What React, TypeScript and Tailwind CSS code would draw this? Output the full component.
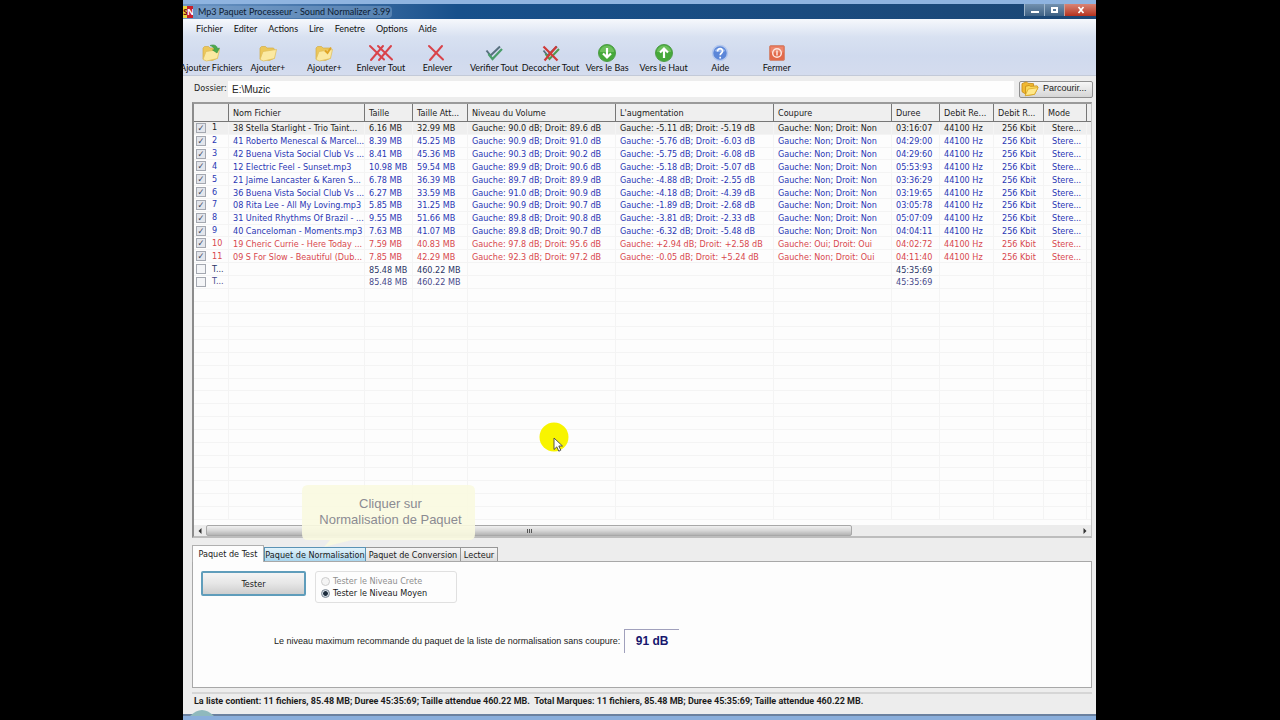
import type { ReactNode } from "react";

const TAHOMA = "font-['DejaVu_Sans_Condensed','DejaVu_Sans',sans-serif]";
const SEGOE = "font-[Lato,'Open_Sans',sans-serif]";

const COLUMNS = [
  { label: "", width: "w-[35px]" },
  { label: "Nom Fichier", width: "w-[136px]" },
  { label: "Taille", width: "w-[48px]" },
  { label: "Taille Att...", width: "w-[55px]" },
  { label: "Niveau du Volume", width: "w-[148px]" },
  { label: "L'augmentation", width: "w-[158px]" },
  { label: "Coupure", width: "w-[118px]" },
  { label: "Duree", width: "w-[48px]" },
  { label: "Debit Re...", width: "w-[54px]" },
  { label: "Debit R...", width: "w-[50px]" },
  { label: "Mode", width: "w-[43px]" },
];

type Row = { no: string; checked: boolean; color: string; cells: string[] };

const BLUE = "text-[#2a36b4]";
const RED = "text-[#d8484e]";
const NN = "Gauche: Non; Droit: Non";

function track(no: number, color: string, name: string, size: string, wav: string, l: string, r: string, al: string, ar: string, clip: string, time: string): Row {
  return {
    no: String(no),
    checked: true,
    color,
    cells: [name, size + " MB", wav + " MB", `Gauche: ${l} dB; Droit: ${r} dB`, `Gauche: ${al} dB; Droit: ${ar} dB`, clip, time, "44100 Hz", "256 Kbit", "Stere..."],
  };
}

const ROWS: Row[] = [
  track(1, "text-[#222]", "38 Stella Starlight - Trio Taint...", "6.16", "32.99", "90.0", "89.6", "-5.11", "-5.19", NN, "03:16:07"),
  track(2, BLUE, "41 Roberto Menescal & Marcel...", "8.39", "45.25", "90.9", "91.0", "-5.76", "-6.03", NN, "04:29:00"),
  track(3, BLUE, "42 Buena Vista Social Club Vs ...", "8.41", "45.36", "90.3", "90.2", "-5.75", "-6.08", NN, "04:29:60"),
  track(4, BLUE, "12 Electric Feel - Sunset.mp3", "10.98", "59.54", "89.9", "90.6", "-5.18", "-5.07", NN, "05:53:93"),
  track(5, BLUE, "21 Jaime Lancaster & Karen S...", "6.78", "36.39", "89.7", "89.9", "-4.88", "-2.55", NN, "03:36:29"),
  track(6, BLUE, "36 Buena Vista Social Club Vs ...", "6.27", "33.59", "91.0", "90.9", "-4.18", "-4.39", NN, "03:19:65"),
  track(7, BLUE, "08 Rita Lee - All My Loving.mp3", "5.85", "31.25", "90.9", "90.7", "-1.89", "-2.68", NN, "03:05:78"),
  track(8, BLUE, "31 United Rhythms Of Brazil - ...", "9.55", "51.66", "89.8", "90.8", "-3.81", "-2.33", NN, "05:07:09"),
  track(9, BLUE, "40 Canceloman - Moments.mp3", "7.63", "41.07", "89.8", "90.7", "-6.32", "-5.48", NN, "04:04:11"),
  track(10, RED, "19 Cheric Currie - Here Today ...", "7.59", "40.83", "97.8", "95.6", "+2.94", "+2.58", "Gauche: Oui; Droit: Oui", "04:02:72"),
  track(11, RED, "09 S For Slow - Beautiful (Dub...", "7.85", "42.29", "92.3", "97.2", "-0.05", "+5.24", "Gauche: Non; Droit: Oui", "04:11:40"),
  { no: "T...", checked: false, color: "text-[#2b3566]", cells: ["", "85.48 MB", "460.22 MB", "", "", "", "45:35:69", "", "", ""] },
  { no: "T...", checked: false, color: "text-[#4a4a8c]", cells: ["", "85.48 MB", "460.22 MB", "", "", "", "45:35:69", "", "", ""] },
];

const EMPTY_ROWS = Array.from({ length: 18 }, (_, i) => i);

function Folder({ children }: { children?: ReactNode }) {
  return (
    <svg viewBox="0 0 20 20" className="size-5" aria-hidden="true">
      <path d="M2 16V5l1.5-1.500h4L9 5h6.500l1 1.500V15l-5 2.500z" fill="#ecc75a" stroke="#d3ad48" strokeWidth=".7" />
      <path d="M5 8.500 18.500 6.500l-2 9-11 2.500L2 16.500z" fill="#fbe9a2" stroke="#dfbd58" strokeWidth=".7" />
      {children}
    </svg>
  );
}

const RedCross = ({ x = 0 }: { x?: number }) => (
  <path d={`M${2 + x} 3l14 13.500M${15 + x} 3L${3 + x} 17`} stroke="#d9434a" strokeWidth="2" fill="none" strokeLinecap="round" />
);

function RoundArrow({ up }: { up: boolean }) {
  return (
    <svg viewBox="0 0 20 20" className="size-5" aria-hidden="true">
      <circle cx="10" cy="10" r="8.500" fill="#46a93a" stroke="#4f9d48" />
      <path d="M3 9a7 6.500 0 0 1 14 0z" fill="#7ccb6a" opacity=".7" />
      <path d={up ? "M10 15V5.500M6 9.500l4-4 4 4" : "M10 5v9.500M6 10.500l4 4 4-4"} stroke="#fff" strokeWidth="2.200" fill="none" />
    </svg>
  );
}

const TOOLS: { label: string; icon: ReactNode }[] = [
  {
    label: "Ajouter Fichiers",
    icon: (
      <Folder>
        <path d="M9 2.500c4-1.500 7 0 7.500 3l2-.5-2.500 5-4.500-3 2-.5C13 4.500 11.500 3.500 9 2.500z" fill="#4daa4a" stroke="#2f8a3a" strokeWidth=".5" />
      </Folder>
    ),
  },
  { label: "Ajouter+", icon: <Folder /> },
  {
    label: "Ajouter+",
    icon: (
      <Folder>
        <path d="M11 7.500 13.500 10 17 4.500" fill="none" stroke="#e0a526" strokeWidth="2" />
      </Folder>
    ),
  },
  {
    label: "Enlever Tout",
    icon: (
      <svg viewBox="0 0 26 20" className="h-5 w-[26px]" aria-hidden="true">
        <RedCross />
        <RedCross x={8} />
      </svg>
    ),
  },
  {
    label: "Enlever",
    icon: (
      <svg viewBox="0 0 20 20" className="size-5" aria-hidden="true">
        <RedCross />
      </svg>
    ),
  },
  {
    label: "Verifier Tout",
    icon: (
      <svg viewBox="0 0 20 20" className="size-5" aria-hidden="true">
        <path d="M2.500 7.500l4 5L16 3.500" stroke="#58707f" strokeWidth="2" fill="none" />
        <path d="M4.500 11l4 5L18 6" stroke="#4a9d6a" strokeWidth="2.200" fill="none" />
      </svg>
    ),
  },
  {
    label: "Decocher Tout",
    icon: (
      <svg viewBox="0 0 20 20" className="size-5" aria-hidden="true">
        <path d="M2.500 7.500l4 5L16 3.500" stroke="#58707f" strokeWidth="1.800" fill="none" />
        <path d="M4.500 11l4 5L18 6" stroke="#4f9b50" strokeWidth="2" fill="none" />
        <path d="M2.500 3.500l14 14M15.500 3.500l-12 14" stroke="#cf3b38" strokeWidth="2.200" fill="none" />
      </svg>
    ),
  },
  { label: "Vers le Bas", icon: <RoundArrow up={false} /> },
  { label: "Vers le Haut", icon: <RoundArrow up /> },
  {
    label: "Aide",
    icon: (
      <svg viewBox="0 0 20 20" className="size-5" aria-hidden="true">
        <circle cx="10" cy="10" r="7.500" fill="#5b86d8" stroke="#b4c8ee" strokeWidth="1.500" />
        <path d="M4.500 8a6 5 0 0 1 11 0q-5 2-11 0z" fill="#a9c4f2" opacity=".7" />
        <path d="M7.500 8.500c0-4 5.500-3.500 5 0-.2 1.500-2.300 1.700-2.300 3.800M10.200 13.800v1.700" stroke="#fff" strokeWidth="1.700" fill="none" />
      </svg>
    ),
  },
  {
    label: "Fermer",
    icon: (
      <svg viewBox="0 0 20 20" className="size-5" aria-hidden="true">
        <rect x="2.500" y="2.500" width="15" height="15" rx="1.500" fill="#e2694a" stroke="#d18a78" />
        <rect x="3.500" y="3.500" width="13" height="6" fill="#f0937a" opacity=".7" />
        <circle cx="10" cy="10" r="4.300" fill="none" stroke="#fde6df" strokeWidth="1.500" />
        <path d="M10 7.500v5" stroke="#fde6df" strokeWidth="1.500" />
      </svg>
    ),
  },
];

function Tick({ checked, label }: { checked: boolean; label: string }) {
  return (
    <input
      type="checkbox"
      defaultChecked={checked}
      aria-label={label}
      className="flex size-[10px] shrink-0 appearance-none items-center justify-center border border-[#a4a8b0] bg-[#f4f5f7] text-[9px] leading-[8px] font-bold text-[#3c4660] checked:bg-[#e3e6ec] checked:after:content-['✓']"
    />
  );
}

function TitleBar() {
  return (
    <header className="flex h-[15px] items-center bg-linear-to-r from-[#6d97c6] via-[#17508b] via-30% to-[#1c4775]">
      <span className="flex h-3 w-[10px] shrink-0 overflow-hidden text-[9px] leading-3 font-bold" aria-hidden="true">
        <span className="w-1 overflow-hidden bg-[#e8d840] text-[#7a1010]">S</span>
        <span className="w-[6px] overflow-hidden bg-[#c8202a] text-white">N</span>
      </span>
      <h1 className={`${SEGOE} ml-1 rounded-sm bg-[#7fa3cc]/50 px-px text-[9px] leading-3 text-[#0e1c30]`}>Mp3 Paquet Processeur - Sound Normalizer 3.99</h1>
      <div className="ml-auto flex h-3 self-start">
        <button aria-label="Reduire" className="flex w-5 items-end justify-center border-l border-[#9fb6cc] bg-linear-to-b from-[#7391ae] to-[#3e6184] pb-[3px]">
          <span className="h-[2px] w-2 bg-white" />
        </button>
        <button aria-label="Agrandir" className="flex w-5 items-center justify-center border-l border-[#9fb6cc] bg-linear-to-b from-[#7391ae] to-[#3e6184]">
          <span className="h-[6px] w-[7px] border-2 border-white" />
        </button>
        <button aria-label="Fermer la fenetre" className="flex w-8 items-center justify-center border-l border-[#c9a09a] bg-linear-to-b from-[#d88474] to-[#b5301c]">
          <svg viewBox="0 0 8 8" className="size-2" aria-hidden="true">
            <path d="M1.500 1l5 6M6.500 1l-5 6" stroke="#fff" strokeWidth="1.700" />
          </svg>
        </button>
      </div>
    </header>
  );
}

function FileTable() {
  return (
    <div className={`${TAHOMA} flex h-[436px] flex-col border-t-2 border-r border-b-2 border-l-2 border-t-[#9a9a9a] border-r-[#c4c4c4] border-b-[#bdbdbd] border-l-[#8c8c8c] bg-[#fdfdfd]`}>
      <div className="flex-1 overflow-hidden">
        <table className="h-[416px] w-full table-fixed border-separate border-spacing-0 text-[9px] leading-3 whitespace-nowrap">
          <thead>
            <tr className="h-[18px] bg-[#efefef]">
              {COLUMNS.map((c, i) => (
                <th key={i} className={`${c.width} border-r border-b border-[#777] px-1 py-0 text-left font-normal text-[#222]`}>
                  {c.label}
                </th>
              ))}
              <th className="border-b border-[#777] p-0" />
            </tr>
          </thead>
          <tbody>
            {ROWS.map((row, r) => (
              <tr key={r} className={`${row.color} ${r === 0 ? "bg-[#efefef]" : ""}`}>
                <td className="border-r border-b border-[#f4f4f4] p-0">
                  <label className="flex items-center gap-1.5 pl-[2px] leading-[11px]">
                    <Tick checked={row.checked} label={`Ligne ${row.no}`} />
                    {row.no}
                  </label>
                </td>
                {row.cells.map((cell, i) => (
                  <td key={i} className={`overflow-hidden border-r border-b border-[#f4f4f4] pt-px pr-0 pb-0 leading-[10px] ${i > 7 ? "pl-2" : "pl-1"}`}>
                    {cell}
                  </td>
                ))}
                <td className="border-b border-[#f4f4f4] p-0" />
              </tr>
            ))}
            {EMPTY_ROWS.map((r) => (
              <tr key={r}>
                {COLUMNS.map((_, i) => (
                  <td key={i} className="border-r border-b border-[#f4f4f4] p-0 leading-[11px]">
                    &nbsp;
                  </td>
                ))}
                <td className="border-b border-[#f4f4f4] p-0" />
              </tr>
            ))}
          </tbody>
        </table>
      </div>
      <div className="flex h-[11px] items-center bg-[#ececec]">
        <button aria-label="Defiler a gauche" className="flex w-3 justify-center">
          <svg viewBox="0 0 4 6" className="h-[6px] w-1" aria-hidden="true">
            <path d="M3.500 0v6L.5 3z" fill="#333" />
          </svg>
        </button>
        <div className="flex flex-1">
          <div className="flex h-[11px] w-[74%] items-center justify-center gap-px rounded-[2px] border border-[#a8a8a8] bg-linear-to-b from-[#f0f0f0] via-[#d8d8d8] to-[#b4b4b4]">
            <span className="h-1 w-px bg-[#555]" />
            <span className="h-1 w-px bg-[#555]" />
            <span className="h-1 w-px bg-[#555]" />
          </div>
        </div>
        <button aria-label="Defiler a droite" className="flex w-3 justify-center">
          <svg viewBox="0 0 4 6" className="h-[6px] w-1" aria-hidden="true">
            <path d="M.5 0v6l3-3z" fill="#333" />
          </svg>
        </button>
      </div>
    </div>
  );
}

function BottomPanel() {
  const tab = "h-[14px] border border-b-0 border-[#979797] bg-linear-to-b from-[#f5f5f5] to-[#dedede] leading-3";
  return (
    <section className={`${TAHOMA} text-[9px] leading-3 text-[#1a1a1a]`}>
      <div role="tablist" className="flex items-end">
        <button role="tab" aria-selected="true" className="z-10 -mb-px h-[17px] w-[72px] border border-b-0 border-[#b0b0b0] bg-[#fdfdfd] leading-3">
          Paquet de Test
        </button>
        <button role="tab" aria-selected="false" className="h-[14px] w-[102px] border border-b-0 border-[#5a93b5] bg-linear-to-b from-[#e2f3fb] to-[#a9d6ee] leading-3">
          Paquet de Normalisation
        </button>
        <button role="tab" aria-selected="false" className={`${tab} w-[95px] border-l-0`}>
          Paquet de Conversion
        </button>
        <button role="tab" aria-selected="false" className={`${tab} w-[37px] border-l-0`}>
          Lecteur
        </button>
      </div>
      <div role="tabpanel" className="h-[127px] border border-[#a8a8a8] bg-[#fdfdfd] px-2 pt-[9px]">
        <div className="flex items-start gap-[9px]">
          <button className="h-[25px] w-[105px] rounded-[2px] border-2 border-[#5f9dbb] bg-linear-to-b from-[#f4f4f4] via-[#e6e6e6] to-[#cecece]">Tester</button>
          <fieldset className="flex h-[32px] w-[142px] flex-col justify-center rounded-[3px] border border-[#e0e0e0] pl-[5px]">
            <label className="flex items-center gap-[3px] text-[#8e8e8e]">
              <input type="radio" name="niveau" disabled className="size-[9px] appearance-none rounded-full border border-[#cccccc] bg-[#f4f4f4]" />
              Tester le Niveau Crete
            </label>
            <label className="flex items-center gap-[3px]">
              <input type="radio" name="niveau" defaultChecked className="size-[9px] appearance-none rounded-full border border-[#7b8794] bg-[radial-gradient(circle,#1c2c3c_40%,#cfd8e0_55%)]" />
              Tester le Niveau Moyen
            </label>
          </fieldset>
        </div>
        <div className="mt-[26px] flex items-center gap-1 pl-[73px] font-['Liberation_Sans',sans-serif]">
          <span>Le niveau maximum recommande du paquet de la liste de normalisation sans coupure:</span>
          <output className="h-6 w-[55px] border-t border-l border-[#a0a0bc] text-center text-[12px] leading-[22px] font-bold text-[#17176e]">91 dB</output>
        </div>
      </div>
    </section>
  );
}

export default function App() {
  return (
    <div className="flex h-screen min-h-[720px] bg-black pr-[184px] pl-[183px]">
      <main className="relative flex min-w-0 flex-1 flex-col bg-[#ededed]">
        <div className="h-1 bg-[#8fb4e0]" />
        <TitleBar />
        <nav className={`${SEGOE} flex h-[18px] items-center gap-[11px] bg-linear-to-b from-[#f6f8fc] to-[#d8e1f1] pt-[2px] pl-[13px] text-[9px] leading-3 text-[#111]`}>
          {["Fichier", "Editer", "Actions", "Lire", "Fenetre", "Options", "Aide"].map((m) => (
            <button key={m}>{m}</button>
          ))}
        </nav>
        <div className="h-[39px] border-b border-[#c3cad8] bg-linear-to-b from-[#d8e1f1] via-[#d0daee] to-[#d4dcee] pt-[6px]">
          <div className="grid w-[622px] grid-cols-11">
            {TOOLS.map((t, i) => (
              <button key={i} className={`${SEGOE} flex flex-col items-center text-[9px] leading-[10px] whitespace-nowrap text-[#111]`}>
                {t.icon}
                {t.label}
              </button>
            ))}
          </div>
        </div>
        <div className="flex h-[26px] items-center pr-[3px] pl-[11px]">
          <label htmlFor="dossier" className={`${TAHOMA} w-[34px] text-[9px] text-[#222]`}>
            Dossier:
          </label>
          <input id="dossier" defaultValue={"E:\\Muzic"} className="h-4 min-w-0 flex-1 bg-[#fefefe] px-1 font-['Liberation_Sans',sans-serif] text-[10px] text-[#222]" />
          <button className="ml-[5px] flex h-[17px] w-[74px] items-center gap-1 rounded-[2px] border border-[#8f8f8f] bg-linear-to-b from-[#f6f6f6] to-[#d6d6d6] pl-px font-['Liberation_Sans',sans-serif] text-[9px] text-[#222]">
            <svg viewBox="0 0 20 18" className="h-4 w-[18px] shrink-0" aria-hidden="true">
              <path d="M1 3l5-2 1.500 1.500L14 3v5L4 14 1 12z" fill="#f0b830" stroke="#c98f1a" />
              <path d="M5 6l4-1 1.500 1L18 5.500l1 2-4 7.500-10 1.500z" fill="#fbd95a" stroke="#c98f1a" />
              <path d="M4.500 16.500 8 9l11-1.500-4 7.500z" fill="#ffe88a" stroke="#d9a520" strokeWidth=".8" />
            </svg>
            Parcourir...
          </button>
        </div>
        <div className="mr-1 ml-[9px]">
          <FileTable />
          <div className="mt-[7px]">
            <BottomPanel />
          </div>
        </div>
        <footer className="mx-1 mt-1 ml-[9px] flex h-[20px] items-start border-t-2 border-[#d6d6d6] pt-px pl-[2px] font-[Roboto,'Liberation_Sans',sans-serif] text-[9px] leading-3 font-bold whitespace-pre text-[#1c1c1c]">
          {"La liste contient: 11 fichiers, 85.48 MB; Duree 45:35:69; Taille attendue 460.22 MB.  Total Marques: 11 fichiers, 85.48 MB; Duree 45:35:69; Taille attendue 460.22 MB."}
        </footer>
        <div className="mt-auto h-[6px] border-t-2 border-[#6b819f] bg-[#8aaedb]" />

        <svg viewBox="0 0 24 10" className="absolute bottom-0 left-[7px] h-[10px] w-6" aria-hidden="true">
          <path d="M0 6Q12-6 24 6z" fill="#8fb9bd" />
        </svg>

        <svg viewBox="0 0 30 30" className="absolute top-[422px] left-[356px] size-[30px]" aria-hidden="true">
          <circle cx="15" cy="15" r="14.500" fill="#f8f400" />
          <path d="M15 16v11.500l2.800-2.600 2 4.300 2-1-2-4.200h3.700z" fill="#fff" stroke="#444" strokeWidth=".9" />
        </svg>

        <div className="absolute top-[485px] left-[119px] h-[63px] w-[173px] text-center">
          <svg viewBox="0 0 173 63" className="absolute inset-0 size-full" aria-hidden="true">
            <path d="M6 0H167q6 0 6 6V49q0 6-6 6H50L22 62l6-7H6q-6 0-6-6V6q0-6 6-6z" fill="#fafae0" fillOpacity=".9" />
          </svg>
          <p className="relative pt-[11px] pl-1 font-['Liberation_Sans',sans-serif] text-[13px] leading-4 text-[#8b8b92]">
            Cliquer sur
            <br />
            Normalisation de Paquet
          </p>
        </div>
      </main>
    </div>
  );
}
